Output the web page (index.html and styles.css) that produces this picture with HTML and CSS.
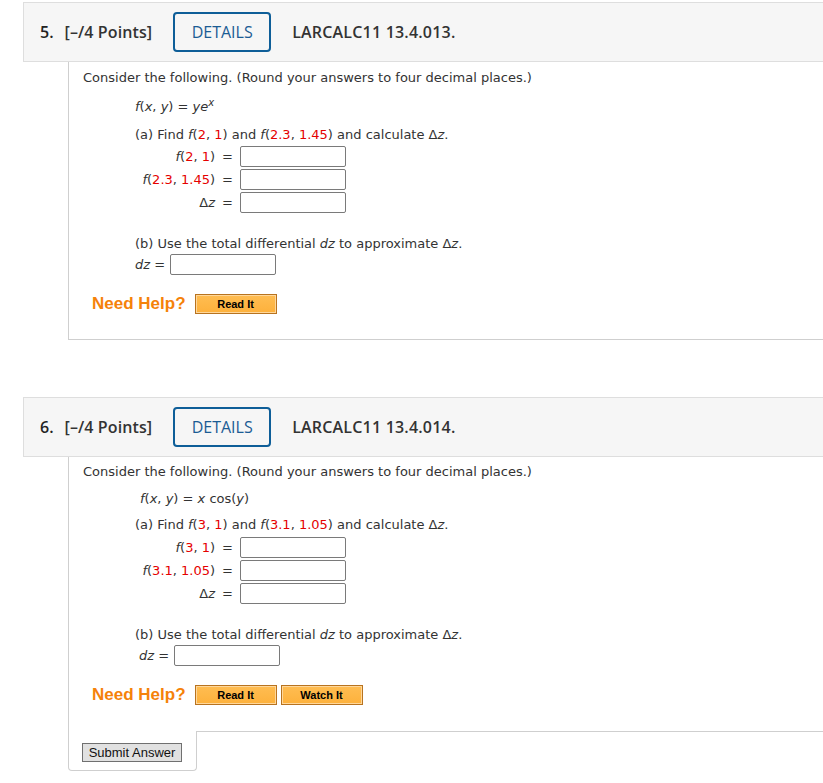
FILE: index.html
```html
<!DOCTYPE html>
<html lang="en">
<head>
<meta charset="utf-8">
<title>Questions</title>
<link rel="stylesheet" href="styles.css">
</head>
<body>
<div class="page">
  <section class="question">
    <div class="qhead">
      <span class="qnum">5.</span>
      <span class="qpts">[–/4 Points]</span>
      <span class="details">DETAILS</span>
      <span class="qref">LARCALC11 13.4.013.</span>
    </div>
    <div class="qbody">
      <p class="intro">Consider the following. (Round your answers to four decimal places.)</p>
      <p class="eq"><i>f</i>(<i>x</i>, <i>y</i>) = <i>ye</i><span class="sup"><i>x</i></span></p>
      <p class="parta">(a) Find <i>f</i>(<span class="r">2</span>, <span class="r">1</span>) and <i>f</i>(<span class="r">2.3</span>, <span class="r">1.45</span>) and calculate Δ<i>z</i>.</p>
      <div class="answers">
        <span class="lbl"><i>f</i>(<span class="r">2</span>, <span class="r">1</span>)<span class="eqs">=</span></span><input class="box" type="text">
        <span class="lbl"><i>f</i>(<span class="r">2.3</span>, <span class="r">1.45</span>)<span class="eqs">=</span></span><input class="box" type="text">
        <span class="lbl">Δ<i>z</i><span class="eqs">=</span></span><input class="box" type="text">
      </div>
      <p class="partb">(b) Use the total differential <i>dz</i> to approximate Δ<i>z</i>.</p>
      <div class="dzrow"><span><i>dz</i> =</span><input class="box" type="text"></div>
      <div class="help">
        <span class="needhelp">Need Help?</span>
        <button class="btn" type="button">Read It</button>
      </div>
    </div>
  </section>

  <section class="question second">
    <div class="qhead">
      <span class="qnum">6.</span>
      <span class="qpts">[–/4 Points]</span>
      <span class="details">DETAILS</span>
      <span class="qref">LARCALC11 13.4.014.</span>
    </div>
    <div class="qbody last">
      <p class="intro">Consider the following. (Round your answers to four decimal places.)</p>
      <p class="eq"><i>f</i>(<i>x</i>, <i>y</i>) = <i>x</i> cos(<i>y</i>)</p>
      <p class="parta">(a) Find <i>f</i>(<span class="r">3</span>, <span class="r">1</span>) and <i>f</i>(<span class="r">3.1</span>, <span class="r">1.05</span>) and calculate Δ<i>z</i>.</p>
      <div class="answers">
        <span class="lbl"><i>f</i>(<span class="r">3</span>, <span class="r">1</span>)<span class="eqs">=</span></span><input class="box" type="text">
        <span class="lbl"><i>f</i>(<span class="r">3.1</span>, <span class="r">1.05</span>)<span class="eqs">=</span></span><input class="box" type="text">
        <span class="lbl">Δ<i>z</i><span class="eqs">=</span></span><input class="box" type="text">
      </div>
      <p class="partb">(b) Use the total differential <i>dz</i> to approximate Δ<i>z</i>.</p>
      <div class="dzrow"><span><i>dz</i> =</span><input class="box" type="text"></div>
      <div class="help">
        <span class="needhelp">Need Help?</span>
        <button class="btn" type="button">Read It</button>
        <button class="btn" type="button">Watch It</button>
      </div>
    </div>
    <div class="submitrow">
      <div class="tab"><button class="submit" type="button">Submit Answer</button></div>
      <div class="filler"></div>
    </div>
  </section>
</div>
</body>
</html>
```

FILE: styles.css
```css
* { box-sizing: border-box; }

html, body {
  margin: 0;
  padding: 0;
  background: #fff;
}

body {
  font-family: "DejaVu Sans", Verdana, sans-serif;
  font-size: 13px;
  color: #333;
}

.page {
  padding: 2px 0 0 23px;
}

.second {
  margin-top: 57px;
}

/* header */
.qhead {
  height: 60px;
  display: flex;
  align-items: center;
  padding-left: 16px;
  background: #f6f6f6;
  border: 1px solid #dedede;
  border-right: 0;
  font-family: "Open Sans", sans-serif;
  font-size: 16px;
  font-weight: 600;
  color: #333;
}

.qnum {
  color: #222;
  margin-right: 11px;
}

.qpts {
  letter-spacing: 0.1px;
}

.details {
  margin-left: 21px;
  margin-right: 21px;
  width: 98px;
  height: 40px;
  display: flex;
  align-items: center;
  justify-content: center;
  border: 2px solid #0e5e98;
  border-radius: 4px;
  color: #1b5c94;
  font-weight: 400;
}

.qref {
  letter-spacing: 0.2px;
}

/* body */
.qbody {
  margin-left: 45px;
  border-left: 1px solid #cfcfcf;
  border-bottom: 1px solid #cfcfcf;
  padding: 8px 0 25px 14px;
}

.qbody p {
  margin: 0;
  line-height: 16px;
}

.r { color: #e50000; }

.sup {
  font-size: 10px;
  vertical-align: 5px;
  line-height: 0;
}

.qbody .eq { margin: 13px 0 0 52px; }
.qbody .parta { margin: 12px 0 0 52px; }

.answers {
  margin: 3px 0 0 52px;
  display: grid;
  grid-template-columns: 98px 106px;
  grid-auto-rows: 21px;
  column-gap: 7px;
  row-gap: 2px;
  align-items: center;
}

.lbl {
  text-align: right;
  line-height: 16px;
  white-space: nowrap;
}

.eqs {
  margin-left: 7px;
}

.box {
  display: block;
  width: 106px;
  height: 21px;
  margin: 0;
  padding: 0 3px;
  border: 1px solid #7a7a7a;
  border-radius: 2px;
  background: #fff;
  font: 13px "DejaVu Sans", sans-serif;
  outline: none;
}

.qbody .partb { margin: 23px 0 0 52px; }

.dzrow {
  margin: 2px 0 0 52px;
  display: flex;
  align-items: center;
  gap: 5px;
  line-height: 16px;
}

.help {
  margin: 19px 0 0 9px;
  height: 20px;
  display: flex;
  align-items: center;
}

.needhelp {
  font-family: "Liberation Sans", Arial, sans-serif;
  font-size: 17px;
  font-weight: 700;
  color: #f5820a;
  margin-right: 9px;
}

.btn {
  width: 82px;
  height: 20px;
  margin: 0 4px 0 0;
  padding: 0;
  border: 1px solid #b8731f;
  box-shadow: inset 0 0 0 1px #ffd79a;
  background: linear-gradient(#ffbd52, #fdb13c);
  font-family: "Liberation Sans", Arial, sans-serif;
  font-size: 11px;
  font-weight: 700;
  color: #000;
}

/* second question tweaks */
.last {
  border-bottom: 0;
  padding-top: 7px;
  padding-bottom: 26px;
}

.last .eq { margin: 11px 0 0 57px; }
.last .parta { margin-top: 10px; }
.last .answers { margin-top: 4px; }
.last .dzrow { margin-left: 56px; }
.last .help { margin-top: 19px; }

.submitrow {
  display: flex;
}

.tab {
  margin-left: 45px;
  width: 129px;
  padding: 12px 0 8px 13px;
  border: 1px solid #cfcfcf;
  border-top: 0;
  border-radius: 0 0 4px 4px;
}

.filler {
  flex: 1;
  border-top: 1px solid #cfcfcf;
}

.submit {
  display: block;
  width: 100px;
  height: 19px;
  margin: 0;
  padding: 0;
  border: 1px solid #707070;
  background: #e1e1e1;
  font-family: "Liberation Sans", Arial, sans-serif;
  font-size: 13px;
  color: #111;
}
```
